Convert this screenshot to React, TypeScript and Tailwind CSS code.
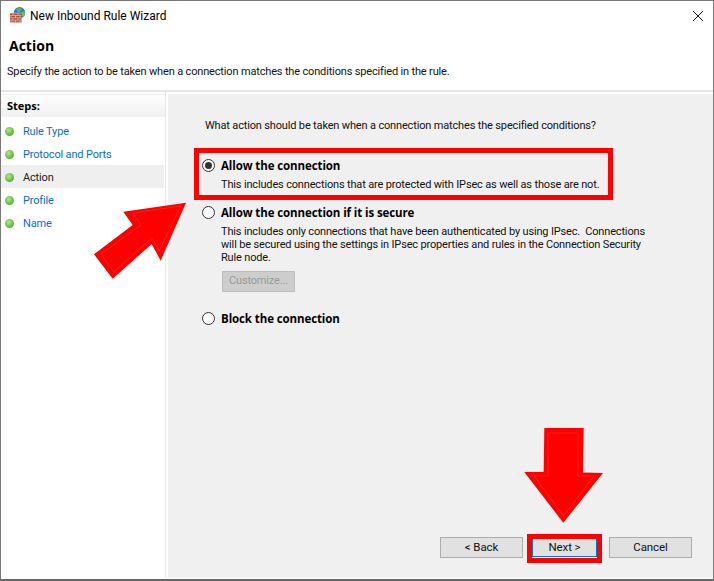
import React from "react";

const FirewallIcon = () => (
  <svg width="18" height="18" viewBox="0 0 18 18" className="shrink-0">
    <circle cx="9.5" cy="5.7" r="5.7" fill="#2a78d4" />
    <path d="M6 2 L10 .6 L12 2.5 L10 5 L7.5 5 Z" fill="#58b653" />
    <path d="M11.5 5 L15 4 L14.6 8.5 L12 9.5 Z" fill="#6cc05a" />
    <rect x="0" y="6" width="11.5" height="9.5" fill="#b0523e" />
    <path d="M0 6.2 H11.5 M0 8.5 H11.5 M0 10.8 H11.5 M0 13.1 H11.5 M0 15.3 H11.5 M3 6 V8.5 M8 6 V8.5 M1 8.5 V10.8 M5.5 8.5 V10.8 M10 8.5 V10.8 M3 10.8 V13.1 M8 10.8 V13.1 M1 13.1 V15.3 M5.5 13.1 V15.3 M10 13.1 V15.3" stroke="#e3bfae" strokeWidth="0.7" fill="none" />
  </svg>
);

const StepDot = () => (
  <span className="w-[9px] h-[9px] rounded-full shrink-0 bg-[radial-gradient(circle_at_40%_35%,#b6e58a,#4fb32f_75%)]" />
);

const Step = ({ label, active }: { label: string; active?: boolean }) => (
  <div className={`h-[23px] pt-[2px] flex items-center pl-[4px] gap-[9px] ${active ? "bg-[#efefef] text-[#222]" : "text-[#0b6bcf]"}`}>
    <StepDot />
    <span className="pt-[2px]">{label}</span>
  </div>
);

const Radio = ({ checked }: { checked?: boolean }) => (
  <span className="w-[13px] h-[13px] rounded-full border border-[#333] bg-white shrink-0 flex items-center justify-center">
    {checked && <span className="w-[7px] h-[7px] rounded-full bg-[#333]" />}
  </span>
);

const Option = ({ title, checked, children }: { title: string; checked?: boolean; children?: React.ReactNode }) => (
  <div>
    <div className="flex items-center gap-[6px] h-[16px]">
      <Radio checked={checked} />
      <span className="font-['Open_Sans',sans-serif] text-[11.5px] tracking-[-0.1px] font-bold text-black">{title}</span>
    </div>
    {children && <div className="pl-[19px] mt-[4px] leading-[13.3px] text-[#111]">{children}</div>}
  </div>
);

const Button = ({ label, next }: { label: string; next?: boolean }) => (
  <div className={`flex items-center justify-center text-[11.5px] tracking-[-0.1px] text-[#111] bg-[#e1e1e1] border ${next ? "w-[65px] h-[19px] self-center border-[#0078d7] ml-[9px] mr-[12px]" : "w-[83px] h-[21px] border-[#adadad]"}`}>{label}</div>
);

export default function App() {
  return (
    <div className="relative w-[714px] h-[581px] overflow-hidden bg-white border-x border-t border-b-2 border-x-[#7a7a7a] border-t-[#777] border-b-[#666] text-[11px] tracking-[-0.16px] font-['Roboto',sans-serif]">
      <div className="h-[29px] flex items-center pl-[9px] gap-[2px] pt-[1px]">
        <FirewallIcon />
        <span className="text-[12px] tracking-normal text-black">New Inbound Rule Wizard</span>
        <svg width="12" height="12" viewBox="0 0 12 12" className="ml-auto mr-[9px]">
          <path d="M1 1 L11 11 M11 1 L1 11" stroke="#111" strokeWidth="1" />
        </svg>
      </div>
      <div className="h-[62px] pl-[6px] pt-[6px] border-b-2 border-[#e6e6e6]">
        <div className="ml-[2px] font-['Open_Sans',sans-serif] text-[14px] tracking-normal font-bold leading-[19px] text-black">Action</div>
        <div className="mt-[9px] text-[#111]">Specify the action to be taken when a connection matches the conditions specified in the rule.</div>
      </div>
      <div className="flex h-[486px]">
        <div className="w-[165px] pt-[2px] border-r border-[#e8e8e8]">
          <div className="h-[23px] pt-[1px] border-t border-[#eeeeee] bg-linear-to-b from-white to-[#f0f0f0] flex items-center pl-[6px] font-['Open_Sans',sans-serif] text-[11px] tracking-normal font-bold text-black">Steps:</div>
          <div className="pt-[2px] pr-[1px]">
            <Step label="Rule Type" />
            <Step label="Protocol and Ports" />
            <Step label="Action" active />
            <Step label="Profile" />
            <Step label="Name" />
          </div>
        </div>
        <div className="flex-1 ml-[2px] mt-[2px] bg-[#f0f0f0] flex flex-col">
          <div className="pl-[37px] pt-[24px] text-[#111]">What action should be taken when a connection matches the specified conditions?</div>
          <div className="pl-[34px] pt-[23px] flex flex-col">
            <Option title="Allow the connection" checked>
              This includes connections that are protected with IPsec as well as those are not.
            </Option>
            <div className="mt-[14px]">
              <Option title="Allow the connection if it is secure">
                This includes only connections that have been authenticated by using IPsec.&nbsp; Connections<br />
                will be secured using the settings in IPsec properties and rules in the Connection Security<br />
                Rule node.
              </Option>
            </div>
            <div className="ml-[20px] mt-[6px] w-[73px] h-[21px] bg-[#cdcdcd] border border-[#bfbfbf] text-[#9a9a9a] flex items-center justify-center">Customize...</div>
            <div className="mt-[19px]">
              <Option title="Block the connection" />
            </div>
          </div>
          <div className="mt-auto mb-[20px] flex justify-end pr-[21px]">
            <Button label="< Back" />
            <Button label="Next >" next />
            <Button label="Cancel" />
          </div>
        </div>
      </div>

      <div className="absolute left-[193px] top-[147px] w-[419px] h-[52px] border-[5px] border-[#ff0000]" />
      <div className="absolute left-[526px] top-[533px] w-[75px] h-[29px] border-[5px] border-[#ff0000]" />
      <svg className="absolute left-[-1px] top-[-1px]" width="714" height="581" viewBox="0 0 714 581">
        <polygon points="186,202.7 123.3,211.7 132.7,225 94,254.3 112.7,278.7 151.7,244 160.7,260.7" fill="#ff0000" />
        <polygon points="181,206 133,213 141,225 101,254 114,272 152,238 159,251" fill="none" stroke="#ff2a2a" strokeWidth="0.7" />
        <polygon points="544.3,428 583.7,428 583,472.5 603,473 563.3,522.7 524.3,472 543.7,472" fill="#ff0000" />
        <polygon points="548,433 578,433 578,476 594,476 563.5,516 534,476 548,476" fill="none" stroke="#ff2a2a" strokeWidth="0.7" />
      </svg>
    </div>
  );
}
